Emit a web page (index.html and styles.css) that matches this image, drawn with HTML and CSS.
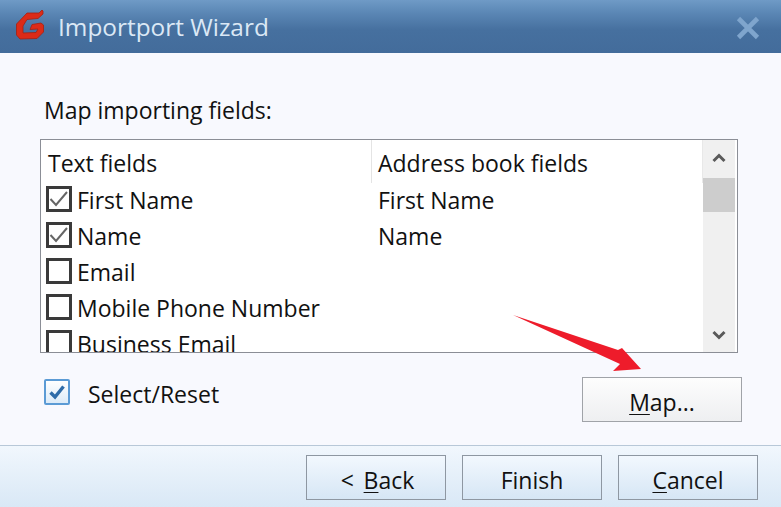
FILE: index.html
```html
<!DOCTYPE html>
<html lang="en">
<head>
<meta charset="utf-8">
<title>Importport Wizard</title>
<link rel="stylesheet" href="styles.css">
</head>
<body>
<div class="dialog">
  <header class="titlebar">
    <svg class="logo" width="30" height="30" viewBox="15 10 30 30">
      <path class="logo-g" d="M27 13 L39 13 L42 10 L43 11 L43 14 L38 18.5 L27 19.5 L23 26 L23 33 L36 32.5 L38 29 L30 29.5 L32 24.5 L41 23 L43.5 25 L43.5 32 L37 38.5 L20 39 L16.5 35 L16.5 24 Z"/>
    </svg>
    <h1 class="title">Importport Wizard</h1>
    <svg class="close" width="26" height="26" viewBox="0 0 26 26">
      <path d="M3.5 3.5 L22.5 22.5 M22.5 3.5 L3.5 22.5"/>
    </svg>
  </header>

  <main class="content">
    <p class="prompt">Map importing fields:</p>
    <div class="listbox">
      <div class="list">
        <div class="list-head">
          <div class="col-a head-a">Text fields</div>
          <div class="col-b head-b">Address book fields</div>
        </div>
        <div class="row">
          <div class="col-a"><span class="box"><svg width="20" height="20" viewBox="0 0 20 20"><path d="M1.5 10 L7 16 L18 3"/></svg></span><span class="label">First Name</span></div>
          <div class="col-b"><span class="label">First Name</span></div>
        </div>
        <div class="row">
          <div class="col-a"><span class="box"><svg width="20" height="20" viewBox="0 0 20 20"><path d="M1.5 10 L7 16 L18 3"/></svg></span><span class="label">Name</span></div>
          <div class="col-b"><span class="label">Name</span></div>
        </div>
        <div class="row"><div class="col-a"><span class="box"></span><span class="label">Email</span></div><div class="col-b"></div></div>
        <div class="row"><div class="col-a"><span class="box"></span><span class="label">Mobile Phone Number</span></div><div class="col-b"></div></div>
        <div class="row"><div class="col-a"><span class="box"></span><span class="label">Business Email</span></div><div class="col-b"></div></div>
      </div>
      <div class="scrollbar">
        <svg class="chev" width="14" height="10" viewBox="0 0 14 10"><path d="M1.5 8 L7 2.5 L12.5 8"/></svg>
        <div class="thumb"></div>
        <svg class="chev chev-down" width="14" height="10" viewBox="0 0 14 10"><path d="M1.5 2 L7 7.5 L12.5 2"/></svg>
      </div>
    </div>
    <div class="actions">
      <label class="select-reset">
        <span class="bluebox"><svg width="20" height="20" viewBox="0 0 20 20"><path d="M3.5 10.5 L8 15 L16.5 4.5"/></svg></span>
        <span class="reset-label">Select/Reset</span>
      </label>
      <button class="btn btn-map" type="button"><u>M</u>ap...</button>
    </div>
  </main>

  <footer class="footer">
    <button class="btn btn-foot btn-back" type="button">&lt;&thinsp; <u>B</u>ack</button>
    <button class="btn btn-foot" type="button">Finish</button>
    <button class="btn btn-foot" type="button"><u>C</u>ancel</button>
  </footer>

  <svg class="arrow" width="140" height="65" viewBox="0 0 140 65">
    <path d="M0 0 L105 35 L109 33 L128 54 L100 56 L107 49 Z"/>
  </svg>
</div>
</body>
</html>
```
FILE: styles.css
```css
* { box-sizing: border-box; }
html, body { margin: 0; padding: 0; }
body {
  width: 781px;
  height: 507px;
  overflow: hidden;
  font-family: "Open Sans", "Noto Sans", sans-serif;
  font-size: 23px;
  color: #111;
}
.dialog {
  position: relative;
  width: 781px;
  height: 507px;
  display: flex;
  flex-direction: column;
}
.titlebar {
  height: 53px;
  flex: none;
  display: flex;
  align-items: center;
  padding: 0 20px 0 15px;
  background: linear-gradient(#6f9ac6 0, #5c88b6 12px, #46709f 30px, #436c9b 53px);
}
.logo { flex: none; width: 30px; height: 30px; margin-top: -3px; }
.logo-g { fill: #dc2b18; stroke: #a8200f; stroke-width: 0.8; stroke-linejoin: round; }
.title {
  margin: 0 0 0 13px;
  font-size: 24.4px;
  font-weight: 400;
  color: #dbe8f5;
  flex: 1;
}
.close { flex: none; margin-top: 3px; margin-right: 0; }
.close path { stroke: #7fa5cd; stroke-width: 4.6; fill: none; }
.content {
  flex: 1;
  display: flex;
  flex-direction: column;
  padding: 0 39px 0 40px;
  background: #f8f9fe;
}
.prompt { margin: 41px 0 0 4px; height: 45px; line-height: 32px; }
.listbox {
  width: 698px;
  height: 214px;
  flex: none;
  display: flex;
  border: 1px solid #8b8e96;
  background: #fff;
  overflow: hidden;
}
.list { flex: 1; min-width: 0; }
.list-head { display: flex; height: 43px; border-right: 1px solid #e8e8e8; }
.row { display: flex; height: 36px; }
.col-a {
  width: 330px;
  flex: none;
  display: flex;
  align-items: center;
  padding-left: 5px;
  white-space: nowrap;
}
.col-b {
  flex: 1;
  display: flex;
  align-items: center;
  padding-left: 7px;
  white-space: nowrap;
}
.head-a { padding: 2px 0 0 7px; }
.head-b { border-left: 1px solid #e4e4e4; padding-top: 2px; padding-left: 6px; }
.label { margin-top: -2px; }
.box {
  width: 26px;
  height: 26px;
  flex: none;
  margin: -4px 5px 0 0;
  border: 3px solid #3a3a3a;
  display: flex;
  align-items: center;
  justify-content: center;
  background: #fff;
}
.box svg { fill: none; stroke: #666; stroke-width: 2; }
.scrollbar {
  width: 32px;
  margin-right: 2px;
  flex: none;
  background: #f0f0f0;
  display: flex;
  flex-direction: column;
  align-items: center;
  padding-top: 13px;
}
.chev { flex: none; }
.chev path { fill: none; stroke: #5a5a5a; stroke-width: 3; }
.chev-down { margin-top: 118px; }
.thumb { width: 100%; height: 34px; margin-top: 15px; background: #cdcdcd; flex: none; }
.actions {
  display: flex;
  justify-content: space-between;
  align-items: flex-start;
  padding-top: 24px;
}
.select-reset {
  display: flex;
  align-items: center;
  margin: 2px 0 0 4px;
  height: 26px;
}
.reset-label { margin-top: 3px; }
.bluebox {
  width: 26px;
  height: 26px;
  margin-right: 18px;
  border: 2px solid #5b9bd5;
  border-radius: 2px;
  background: linear-gradient(#fff, #dcebf8);
  display: flex;
  align-items: center;
  justify-content: center;
}
.bluebox svg { fill: none; stroke: #2f6ca8; stroke-width: 3.4; }
.btn {
  font: inherit;
  color: #111;
  width: 160px;
  height: 45px;
  padding: 5px 0 0;
  border: 1px solid #a0a3a8;
  background: linear-gradient(#fdfdfd, #eeeff1);
  border-radius: 0;
}
.btn u { text-underline-offset: 3px; text-decoration-thickness: 1px; }
.footer {
  height: 62px;
  flex: none;
  display: flex;
  justify-content: flex-end;
  gap: 16px;
  padding: 9px 23px 0 0;
  border-top: 1px solid #b8c8d8;
  background: linear-gradient(#f1f7fd, #d9e8f6);
}
.btn-foot {
  width: 140px;
  border-color: #8e97a2;
  background: linear-gradient(#f2f8fe, #d6e6f5);
}
.btn-back { padding-left: 3px; }
.arrow {
  position: absolute;
  left: 513px;
  top: 315px;
  fill: #ee1c2b;
}
```
